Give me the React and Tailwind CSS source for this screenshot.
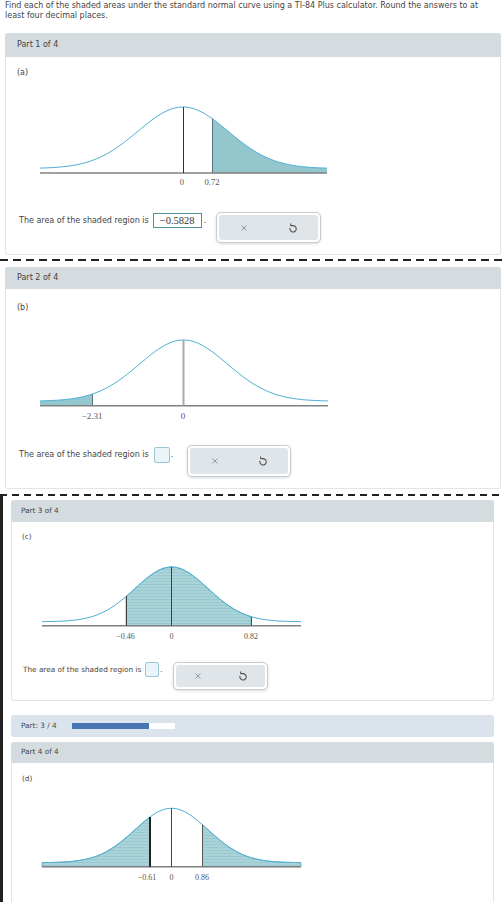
import { X } from "lucide-react";

const curveY = (x, c) =>
  c.axisY - c.base - (c.peak - c.base) * Math.exp(-((x - c.cx) ** 2) / (2 * c.sig * c.sig));

const pts = (c, a, b) => {
  const out = [];
  for (let x = a; x < b; x += 1) out.push(`${x.toFixed(1)},${curveY(x, c).toFixed(1)}`);
  out.push(`${b.toFixed(1)},${curveY(b, c).toFixed(1)}`);
  return out;
};

const charts = {
  a: {
    w: 295, h: 96, x0: 2, x1: 289, cx: 145, sig: 45, axisY: 77, peak: 66, base: 4.5, fs: 8.6, labelY: 89,
    shade: [[174, 289]], stripes: false,
    markers: [
      { x: 145.5, lx: 144, label: "0", stroke: "#333", sw: 1 },
      { x: 174.5, lx: 174, label: "0.72", stroke: "#56757b", sw: 1 },
    ],
  },
  b: {
    w: 295, h: 96, x0: 2, x1: 290, cx: 145.5, sig: 44, axisY: 75.7, peak: 65.7, base: 4.5, fs: 9, labelY: 88.6,
    shade: [[2, 54]], stripes: false,
    markers: [
      { x: 54.5, lx: 54, label: "−2.31", stroke: "#56757b", sw: 1 },
      { x: 145.5, lx: 145, label: "0", stroke: "#aaaaaa", sw: 2 },
    ],
  },
  c: {
    w: 270, h: 90, x0: 4, x1: 263, cx: 133.5, sig: 36.5, axisY: 70.7, peak: 58.7, base: 4, fs: 8, labelY: 84,
    shade: [[88, 213]], stripes: true,
    markers: [
      { x: 88.5, lx: 87.5, label: "−0.46", stroke: "#3f3f3f", sw: 1 },
      { x: 133.5, lx: 133.5, label: "0", stroke: "#3f3f3f", sw: 1 },
      { x: 213.5, lx: 213, label: "0.82", stroke: "#555555", sw: 1 },
    ],
  },
  d: {
    w: 270, h: 90, x0: 4, x1: 263, cx: 133.5, sig: 36.5, axisY: 69.7, peak: 58.4, base: 4, fs: 8, labelY: 83,
    shade: [[4, 112], [164.5, 263]], stripes: true,
    markers: [
      { x: 112, lx: 109, label: "−0.61", stroke: "#222222", sw: 2 },
      { x: 133.5, lx: 133.5, label: "0", stroke: "#444444", sw: 1 },
      { x: 164.5, lx: 164, label: "0.86", stroke: "#555555", sw: 1 },
    ],
  },
};

function Bell({ id }) {
  const c = charts[id];
  return (
    <svg width={c.w} height={c.h} className="block">
      <defs>
        <pattern id={`st-${id}`} width={c.w} height="3" patternUnits="userSpaceOnUse">
          <rect width={c.w} height="3" fill="#a8d3d8" />
          <rect y="2" width={c.w} height="1" fill="#9bc9cf" />
        </pattern>
      </defs>
      {c.shade.map(([a, b], i) => (
        <path
          key={i}
          d={`M${a},${c.axisY} L${pts(c, a, b).join(" L")} L${b},${c.axisY} Z`}
          fill={c.stripes ? `url(#st-${id})` : "#93c6cd"}
          stroke={c.stripes ? "#5ea9b6" : "none"}
          strokeWidth="0.8"
        />
      ))}
      <line x1={c.x0} x2={c.x1} y1={c.axisY} y2={c.axisY} stroke="#808080" strokeWidth="1.5" />
      <polyline points={pts(c, c.x0, c.x1).join(" ")} fill="none" stroke="#52b1d6" strokeWidth="1" />
      {c.markers.map((m, i) => (
        <g key={i}>
          <line x1={m.x} x2={m.x} y1={c.axisY} y2={curveY(m.x, c)} stroke={m.stroke} strokeWidth={m.sw} />
          <text
            x={m.lx}
            y={c.labelY}
            textAnchor="middle"
            fontSize={c.fs}
            fill="#555"
            fontFamily="'Liberation Serif', serif"
          >
            {m.label}
          </text>
        </g>
      ))}
    </svg>
  );
}

// small undo arrow, drawn by hand so it reads at 8px
function UndoIcon({ className, style }) {
  return (
    <svg width="9" height="10" viewBox="0 0 9 10" className={className} style={style} fill="none" stroke="currentColor" strokeWidth="1.1" strokeLinecap="round" strokeLinejoin="round">
      <path d="M4.5 2.6 A3.2 3.2 0 1 1 1.4 5.2" />
      <path d="M2.2 2.6 H4.6 M2.2 2.6 V0.9" />
    </svg>
  );
}

function Buttons({ w, h, xl, ul }) {
  return (
    <div
      className="border border-[#c6cbce] rounded-[5px] p-[2px] bg-white shadow-[0_1px_3px_rgba(0,0,0,0.15)]"
      style={{ width: w, height: h }}
    >
      <div className="relative h-full bg-[#dfe5e8] rounded-[3px] text-[#555]">
        <X size={9} strokeWidth={1.4} className="absolute top-1/2 -translate-y-1/2 -translate-x-1/2" style={{ left: xl }} />
        <UndoIcon className="absolute top-1/2 -translate-y-1/2 -translate-x-1/2" style={{ left: ul }} />
      </div>
    </div>
  );
}

function EmptyBox({ w, h }) {
  return <span className="inline-block border border-[#9cc6d6] bg-[#eaf5fa] rounded-[2px]" style={{ width: w, height: h }} />;
}

function Dashes({ period }) {
  return (
    <div
      className="h-[2px] w-full"
      style={{ backgroundImage: `repeating-linear-gradient(90deg,#222 0 ${period - 5}px,transparent ${period - 5}px ${period}px)` }}
    />
  );
}

export default function App() {
  return (
    <div className="w-[503px] bg-white text-[#444] font-['DejaVu_Sans',sans-serif] overflow-hidden">
      <p className="px-[5px] pt-px text-[8px] leading-[10px] w-[496px]">
        Find each of the shaded areas under the standard normal curve using a TI-84 Plus calculator. Round the answers to at least four decimal places.
      </p>

      {/* Part 1 */}
      <div className="ml-[5px] mr-[2px] mt-[12px] border border-t-0 border-[#e1e5e7] rounded-[3px]">
        <div className="h-[24px] bg-[#d4dcdf] rounded-t-[3px] -mx-px flex items-center pl-[12px] text-[8px]">Part 1 of 4</div>
        <div className="pl-[11px] pt-[11px] pb-[11px] text-[8px] leading-[10px]">
          <div>(a)</div>
          <div className="mt-[18px] ml-[21px]">
            <Bell id="a" />
          </div>
          <div className="mt-[20px] flex items-start">
            <div className="w-[197px] ml-[2px] mt-px flex items-center">
              <span>The area of the shaded region is</span>
              <span className="ml-[4px] inline-flex items-center justify-center w-[49px] h-[15px] border border-[#4f929c] text-[10.5px] text-[#333] font-['Liberation_Serif',serif]">
                −0.5828
              </span>
              <span className="ml-[2px]">.</span>
            </div>
            <Buttons w={105} h={31} xl={25} ul={74} />
          </div>
        </div>
      </div>

      <div className="mt-[4px]">
        <Dashes period={13} />
      </div>

      {/* Part 2 */}
      <div className="ml-[5px] mr-[2px] mt-[6px] border border-t-0 border-[#e1e5e7] rounded-[3px]">
        <div className="h-[22px] bg-[#d4dcdf] rounded-t-[3px] -mx-px flex items-center pl-[12px] text-[8px]">Part 2 of 4</div>
        <div className="pl-[11px] pt-[14px] pb-[11px] text-[8px] leading-[10px]">
          <div>(b)</div>
          <div className="mt-[17px] ml-[21px]">
            <Bell id="b" />
          </div>
          <div className="mt-[19px] flex items-start">
            <div className="w-[168px] ml-[2px] mt-[1.5px] flex items-center">
              <span>The area of the shaded region is</span>
              <span className="ml-[5px] flex">
                <EmptyBox w={16} h={16} />
              </span>
              <span className="ml-[1px]">.</span>
            </div>
            <Buttons w={104} h={32} xl={25} ul={73} />
          </div>
        </div>
      </div>

      <div className="mt-[5px]">
        <Dashes period={12} />
      </div>

      {/* Parts 3 and 4 */}
      <div className="border-l-[3px] border-[#222] pl-[8px] pr-[9px] pt-[4px]">
        <div className="border border-t-0 border-[#e1e5e7] rounded-[3px]">
          <div className="h-[22px] bg-[#d4dcdf] rounded-t-[3px] -mx-px flex items-center pl-[10px] text-[7.3px]">Part 3 of 4</div>
          <div className="pl-[10px] pt-[10px] pb-[10px] text-[7.3px] leading-[10px]">
            <div>(c)</div>
            <div className="mt-[13px] ml-[16px]">
              <Bell id="c" />
            </div>
            <div className="mt-[17px] flex items-start">
              <div className="w-[150px] ml-[1px] flex items-center">
                <span>The area of the shaded region is</span>
                <span className="ml-[4px] flex">
                  <EmptyBox w={14} h={15} />
                </span>
                <span className="ml-[1px]">.</span>
              </div>
              <Buttons w={95} h={28} xl={22} ul={67} />
            </div>
          </div>
        </div>

        <div className="mt-[14px] h-[22px] bg-[#dbe4ed] rounded-[3px] flex items-center pl-[10px] text-[7.3px]">
          <span className="w-[51px]">Part: 3 / 4</span>
          <div className="w-[103px] h-[6px] bg-white">
            <div className="h-full w-[77px] bg-[#4876b2]" />
          </div>
        </div>

        <div className="mt-[5px] border border-t-0 border-[#e1e5e7] rounded-t-[3px]">
          <div className="h-[21px] bg-[#d4dcdf] rounded-t-[3px] -mx-px flex items-center pl-[10px] text-[7.3px]">Part 4 of 4</div>
          <div className="pl-[10px] pt-[11px] pb-[24px] text-[7.3px] leading-[10px]">
            <div>(d)</div>
            <div className="mt-[13px] ml-[16px]">
              <Bell id="d" />
            </div>
          </div>
        </div>
      </div>
    </div>
  );
}
